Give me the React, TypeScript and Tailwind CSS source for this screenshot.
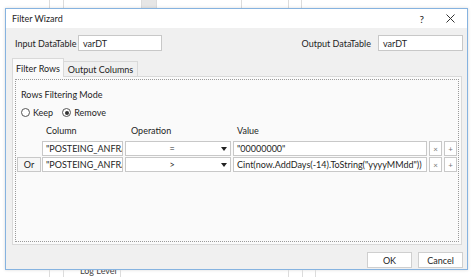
export default function App() {
  return (
    <div className="flex h-[277px] w-[474px] flex-col overflow-hidden whitespace-nowrap bg-white font-['Lato',sans-serif] text-[9px] leading-none text-[#1e1e1e]">
      {/* app behind the dialog, top strip */}
      <div className="flex h-[8px] shrink-0">
        <div className="w-[49px]" />
        <div className="w-[14px] border-l border-[#dcdcdc]" />
        <div className="w-[78px] border-l border-[#dcdcdc]" />
        <div className="w-[15px] border-l border-[#dcdcdc] bg-[#e6e6e6]" />
        <div className="w-[85px] border-l border-[#dcdcdc]" />
        <div className="w-[47px] border-l border-[#dcdcdc]" />
        <div className="w-[13px] border-l border-[#dcdcdc]" />
        <div className="flex-1 border-l border-[#dcdcdc]" />
      </div>

      {/* dialog */}
      <div className="ml-[5px] flex h-[262px] w-[463px] shrink-0 flex-col border border-[#86b3e0] bg-[#f0f0f0] shadow-[0_0_3px_rgba(0,0,0,0.15)]">
        <div className="flex h-[19px] items-center bg-white pl-[6px] pr-[12px]">
          <span>Filter Wizard</span>
          <span className="ml-auto mr-[22px] text-[10px]">?</span>
          <svg width="9" height="9" viewBox="0 0 9 9" className="stroke-[#333]">
            <path d="M0.5 0.5 L8.5 8.5 M8.5 0.5 L0.5 8.5" strokeWidth="1" />
          </svg>
        </div>

        <div className="flex flex-1 flex-col px-[6px] pt-[7px]">
          <div className="flex h-[16px] items-center">
            <span className="ml-[3px] w-[63px]">Input DataTable</span>
            <div className="flex h-[16px] w-[84px] items-center border border-[#c8c8c8] bg-white pl-[4px]">varDT</div>
            <span className="ml-auto mr-[7px]">Output DataTable</span>
            <div className="mr-[-2px] flex h-[16px] w-[85px] items-center border border-[#c8c8c8] bg-white pl-[4px]">varDT</div>
          </div>

          {/* tabs */}
          <div className="mt-[6px] flex h-[19px] items-end">
            <div className="relative z-10 mb-[-1px] flex h-[19px] w-[52px] items-center justify-center border border-b-0 border-[#d9d9d9] bg-[#fafafa]">
              Filter Rows
            </div>
            <div className="flex h-[15px] w-[74px] items-center justify-center border border-l-0 border-b-0 border-[#d9d9d9] bg-[#f0f0f0]">
              Output Columns
            </div>
          </div>

          <div className="h-[169px] w-[450px] border border-[#d9d9d9] bg-[#fafafa] p-[2px]">
            <div className="flex h-full flex-col border border-dotted border-[#9a9a9a] px-[1px]">
              <div className="ml-[4px] mt-[10px]">Rows Filtering Mode</div>
              <div className="ml-[4px] mt-[9px] flex items-center">
                <span className="h-[9px] w-[9px] rounded-full border border-[#555] bg-white" />
                <span className="ml-[3px]">Keep</span>
                <span className="ml-[9px] flex h-[9px] w-[9px] items-center justify-center rounded-full border border-[#555] bg-white">
                  <span className="h-[4px] w-[4px] rounded-full bg-[#333]" />
                </span>
                <span className="ml-[3px]">Remove</span>
              </div>

              <div className="mt-[9px] flex">
                <span className="ml-[29px] w-[85px]">Column</span>
                <span className="w-[106px]">Operation</span>
                <span>Value</span>
              </div>

              <div className="mt-[6px] flex h-[15px] gap-[2px] pl-[25px]">
                <Field w="w-[81px]" text={'"POSTEING_ANFRAG'} />
                <Combo op="=" />
                <Field w="w-[194px]" text={'"00000000"'} />
                <SmallBtn label="×" />
                <SmallBtn label="+" />
              </div>
              <div className="mt-[1px] flex h-[15px] gap-[2px]">
                <div className="mr-[-1px] flex w-[24px] items-center justify-center border border-[#c8c8c8] bg-[#f6f6f6]">Or</div>
                <Field w="w-[81px]" text={'"POSTEING_ANFRAG'} />
                <Combo op=">" />
                <Field w="w-[194px]" text={'Cint(now.AddDays(-14).ToString("yyyyMMdd"))'} />
                <SmallBtn label="×" />
                <SmallBtn label="+" />
              </div>
            </div>
          </div>

          <div className="mt-[7px] flex justify-end gap-[6px]">
            <div className="flex h-[16px] w-[45px] items-center justify-center border border-[#cfcfcf] bg-white">OK</div>
            <div className="mr-[-2px] flex h-[16px] w-[45px] items-center justify-center border border-[#cfcfcf] bg-white">Cancel</div>
          </div>
        </div>
      </div>

      {/* app behind the dialog, bottom strip */}
      <div className="flex h-[7px] shrink-0 overflow-hidden">
        <div className="w-[49px]" />
        <div className="w-[14px] border-l border-[#dcdcdc]" />
        <div className="relative w-[57px] border-l border-[#dcdcdc]">
          <span className="absolute left-[16px] top-[-4px] text-[9px] text-[#444]">Log Level</span>
        </div>
        <div className="w-[168px] border-l border-[#dcdcdc]" />
        <div className="w-[14px] border-l border-[#dcdcdc]" />
        <div className="w-[13px] border-l border-[#dcdcdc]" />
        <div className="flex-1 border-l border-[#dcdcdc]" />
      </div>
    </div>
  );
}

function Field({ w, text }: { w: string; text: string }) {
  return (
    <div className={`${w} flex items-center overflow-hidden border border-[#c8c8c8] bg-white pl-[3px]`}>
      {text}
    </div>
  );
}

function Combo({ op }: { op: string }) {
  return (
    <div className="relative flex w-[106px] items-center justify-center border border-[#c8c8c8] bg-white">
      <span className="mr-[12px]">{op}</span>
      <span className="absolute right-[3px] top-[5px] h-0 w-0 border-x-[3px] border-t-[4px] border-x-transparent border-t-[#222]" />
    </div>
  );
}

function SmallBtn({ label }: { label: string }) {
  return (
    <div className="flex w-[13px] items-center justify-center border border-[#c8c8c8] bg-white text-[8px] text-[#777]">
      {label}
    </div>
  );
}
